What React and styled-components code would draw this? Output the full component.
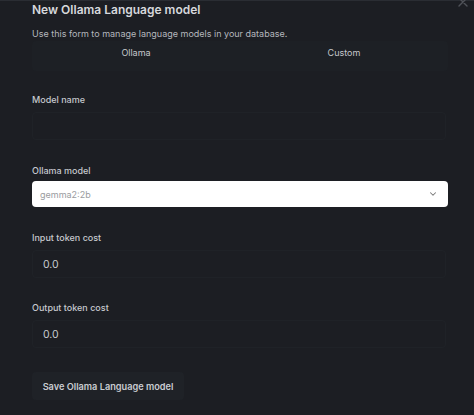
import React from "react";
import styled, { createGlobalStyle } from "styled-components";

const Global = createGlobalStyle`
  html, body { margin: 0; padding: 0; background: #1b1d22; }
  body { font-family: Inter, "Noto Sans", sans-serif; -webkit-font-smoothing: antialiased; }
  * { box-sizing: border-box; }
`;

const Panel = styled.div`
  position: relative;
  width: 474px;
  height: 415px;
  background: #1c1e23;
  border-top: 1px solid #2a2d33;
  padding: 0 26px 0 32px;
  display: flex;
  flex-direction: column;
  color: #d2d4d8;
`;

const Close = styled.svg`
  position: absolute;
  top: -5px;
  right: 5px;
`;

const Title = styled.h2`
  margin: 0;
  font-size: 12px;
  font-weight: 600;
  line-height: 18px;
  color: #d6d8dc;
`;

const Subtitle = styled.p`
  margin: 8px 0 0;
  font-size: 9px;
  line-height: 14px;
  color: #b4b7bd;
`;

const Tabs = styled.div`
  display: grid;
  grid-template-columns: 1fr 1fr;
  width: 416px;
  height: 30px;
  background: #1d2025;
  border-radius: 4px;
`;

const Tab = styled.div`
  text-align: center;
  font-size: 9px;
  line-height: 14px;
  padding-top: 5px;
  color: #c4c7cc;
`;

const Field = styled.div`
  display: flex;
  flex-direction: column;
  width: 416px;
  margin-top: ${(p) => p.$mt}px;
`;

const Label = styled.label`
  font-size: 9px;
  font-weight: 500;
  line-height: 14px;
  color: #c6c9ce;
`;

const Input = styled.div`
  margin-top: 5px;
  height: 28px;
  width: 414px;
  border: 1px solid #1f2227;
  border-radius: 4px;
  padding: 0 10px;
  display: flex;
  align-items: center;
  font-size: 10.5px;
  color: #c8cbd0;
`;

const Select = styled.div`
  margin-top: 3px;
  height: 26px;
  background: #ffffff;
  border-radius: 4px;
  padding: 0 10px 0 8px;
  display: flex;
  align-items: center;
  justify-content: space-between;
  font-size: 9px;
  color: #9a9ca0;
`;

const Button = styled.button`
  margin-top: 24px;
  align-self: flex-start;
  width: 152px;
  height: 28px;
  border: none;
  border-radius: 4px;
  background: #1f2227;
  color: #c9ccd1;
  font-family: inherit;
  font-size: 9.2px;
  font-weight: 600;
  padding: 0;
`;

export default function App() {
  return (
    <>
      <Global />
      <Panel>
        <Close width="12" height="12" viewBox="0 0 12 12" fill="none" stroke="#4f5258" strokeWidth="1.4" strokeLinecap="round">
          <path d="M2 2l8 8M10 2l-8 8" />
        </Close>
        <Title>New Ollama Language model</Title>
        <Subtitle>Use this form to manage language models in your database.</Subtitle>
        <Tabs>
          <Tab>Ollama</Tab>
          <Tab>Custom</Tab>
        </Tabs>
        <Field $mt={22}>
          <Label>Model name</Label>
          <Input />
        </Field>
        <Field $mt={24}>
          <Label>Ollama model</Label>
          <Select>
            <span>gemma2:2b</span>
            <svg width="10" height="10" viewBox="0 0 24 24" fill="none" stroke="#777" strokeWidth="2.5" strokeLinecap="round" strokeLinejoin="round">
              <path d="m6 9 6 6 6-6" />
            </svg>
          </Select>
        </Field>
        <Field $mt={24}>
          <Label>Input token cost</Label>
          <Input>0.0</Input>
        </Field>
        <Field $mt={23}>
          <Label>Output token cost</Label>
          <Input>0.0</Input>
        </Field>
        <Button>Save Ollama Language model</Button>
      </Panel>
    </>
  );
}
